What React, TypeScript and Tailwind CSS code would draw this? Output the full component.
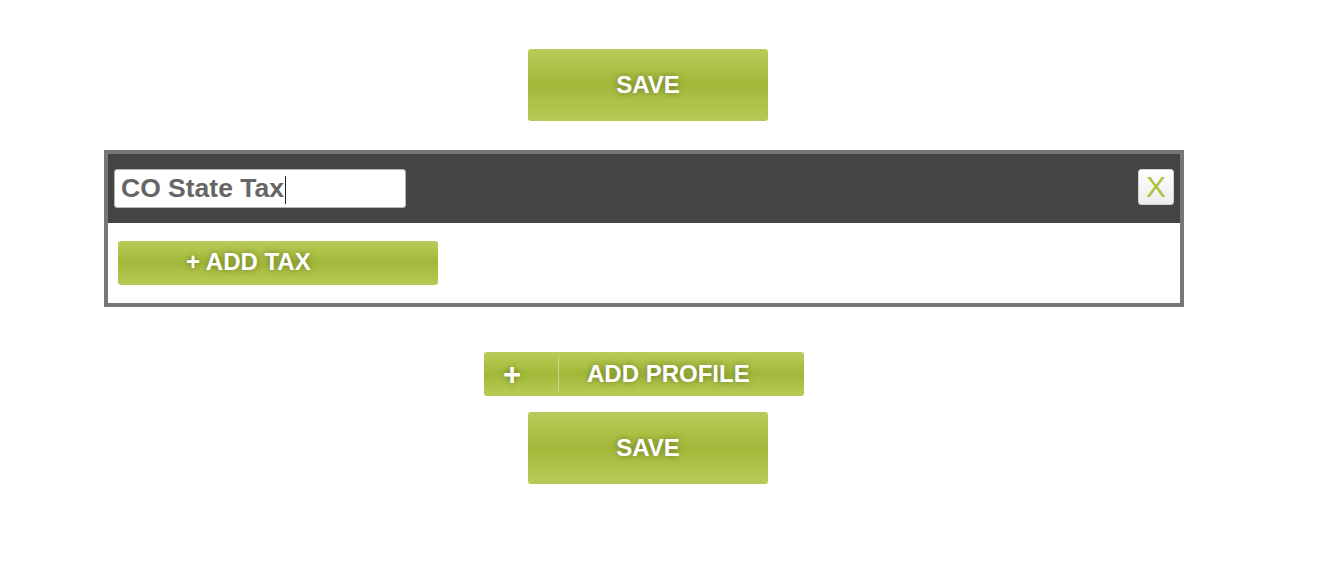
import React from "react";

const green =
  "bg-[linear-gradient(to_bottom,#b9cb5a_0%,#abc044_30%,#a1b73a_50%,#abc044_70%,#b8ca57_100%)]";
const shadowText = "[text-shadow:0_0_6px_rgba(0,0,0,0.35)]";

export default function App() {
  return (
    <div
      className="w-[1328px] h-[584px] bg-white"
      style={{ fontFamily: '"Liberation Sans", Arial, sans-serif' }}
    >
      <div className="pt-[49px] ml-[104px] w-[1080px] flex flex-col">
        <button
          className={`ml-[424px] w-[240px] h-[72px] rounded-[3px] ${green} text-white font-bold text-[24px] ${shadowText} flex items-center justify-center leading-none`}
        >
          SAVE
        </button>

        <div className="mt-[29px] border-[4px] border-[#777777] bg-white">
          <div className="h-[69px] bg-[#444444] flex items-center justify-between px-[6px]">
            <div className="w-[292px] h-[39px] bg-white border border-[#b5b5b5] rounded-[3px] flex items-center pl-[6px] text-[#666666] font-bold text-[26.5px] leading-none">
              <span>CO State Tax</span>
              <span className="inline-block w-[1px] h-[28px] bg-[#222] ml-[1px] mt-[3px]" />
            </div>
            <button className="w-[36px] h-[36px] mb-[3px] rounded-[3px] border border-[#cfcfcf] bg-[linear-gradient(to_bottom,#ffffff,#ececec)] text-[#a9c23c] text-[30px] leading-none flex items-center justify-center">
              X
            </button>
          </div>
          <div className="pt-[18px] pb-[18px] pl-[10px]">
            <button
              className={`w-[320px] h-[44px] rounded-[3px] ${green} text-white font-bold text-[24px] ${shadowText} flex items-center pl-[68px] pb-[3px] leading-none`}
            >
              + ADD TAX
            </button>
          </div>
        </div>

        <div className="mt-[45px] ml-[380px] w-[320px] h-[44px] rounded-[3px] flex items-center overflow-hidden">
          <div
            className={`w-full h-full ${green} flex items-center text-white font-bold ${shadowText}`}
          >
            <span className="w-[56px] text-center text-[31px] leading-none pt-[1px]">+</span>
            <span className="ml-[18px] w-[1px] h-[36px] bg-[#c9d98a]" />
            <span className="pl-[28px] text-[24px] leading-none">ADD PROFILE</span>
          </div>
        </div>

        <button
          className={`mt-[16px] ml-[424px] w-[240px] h-[72px] rounded-[3px] ${green} text-white font-bold text-[24px] ${shadowText} flex items-center justify-center leading-none`}
        >
          SAVE
        </button>
      </div>
    </div>
  );
}
